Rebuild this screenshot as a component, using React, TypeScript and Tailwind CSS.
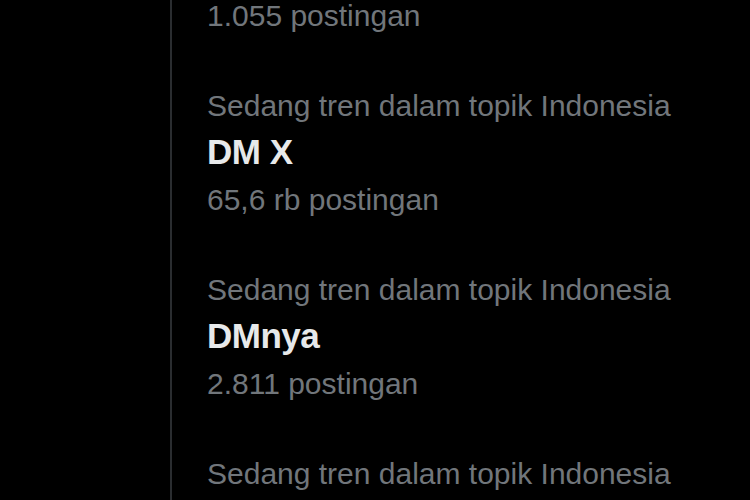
const trends = [
  { context: "Sedang tren dalam topik Indonesia", title: "DM X", count: "65,6 rb postingan" },
  { context: "Sedang tren dalam topik Indonesia", title: "DMnya", count: "2.811 postingan" },
  { context: "Sedang tren dalam topik Indonesia", title: "", count: "" },
];

function TrendItem({ context, title, count }: { context: string; title: string; count: string }) {
  return (
    <div className="py-[23px]">
      <p className="h-[44px] text-[30px] leading-[44px] text-[#71767b] whitespace-nowrap">{context}</p>
      {title && (
        <p className="h-[48px] text-[35px] font-bold leading-[48px] tracking-[-0.5px] text-[#e7e9ea] whitespace-nowrap">
          {title}
        </p>
      )}
      {count && (
        <p className="mt-[2px] h-[44px] text-[30px] leading-[44px] text-[#71767b] whitespace-nowrap">{count}</p>
      )}
    </div>
  );
}

export default function App() {
  return (
    <div
      className="flex h-[500px] w-[750px] overflow-hidden bg-black"
      style={{ fontFamily: '"Liberation Sans", Arial, sans-serif' }}
    >
      <div className="w-[170px] shrink-0" />
      <div className="w-[2px] shrink-0 bg-[#2a2d30]" />
      <div className="flex-1 pl-[35px]">
        <div className="-mt-[6px] pb-[23px]">
          <p className="h-[44px] text-[30px] leading-[44px] text-[#71767b] whitespace-nowrap">1.055 postingan</p>
        </div>
        {trends.map((t, i) => (
          <TrendItem key={i} {...t} />
        ))}
      </div>
    </div>
  );
}
